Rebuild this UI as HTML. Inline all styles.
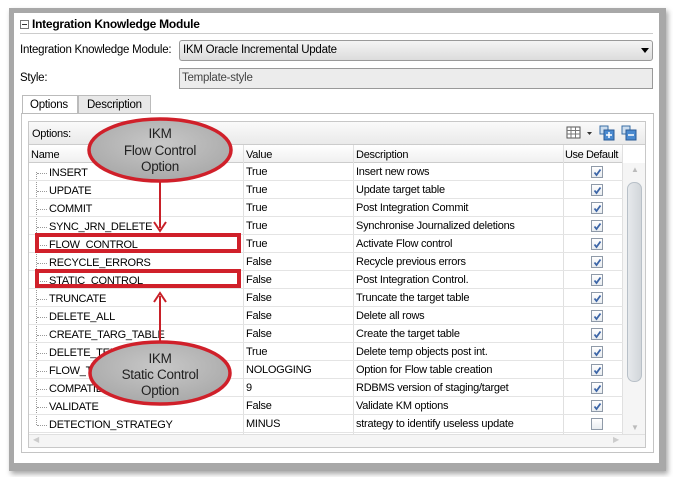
<!DOCTYPE html>
<html><head><style>
*{margin:0;padding:0;box-sizing:border-box}
body{width:673px;height:477px;background:#fff;position:relative;overflow:hidden;font-family:"Liberation Sans",sans-serif;font-size:11px;color:#000;letter-spacing:-0.25px}
.a{position:absolute}
.frame{left:9px;top:8px;width:657px;height:463px;background:#a8a8a8;box-shadow:2px 3px 5px rgba(0,0,0,.35)}
.panel{left:14px;top:13px;width:645px;height:450px;background:#fff}
.t{position:absolute;white-space:nowrap}
.row{position:absolute;left:29px;width:594px;height:18px;border-bottom:1px solid #e4e4e4}
.cb{position:absolute;left:591px;width:12px;height:12px;border:1px solid #8f9aa8;background:linear-gradient(#fff,#e8ecf0)}
.cb svg{position:absolute;left:1px;top:1px}
.vl{position:absolute;top:145px;height:289px;width:1px;background:#e0e0e0}
</style></head><body>
<div class="a frame"></div>
<div class="a panel"></div>
<div class="a" style="left:20px;top:20px;width:9px;height:9px;border:1px solid #777;background:#fff"></div>
<div class="a" style="left:22px;top:24px;width:5px;height:1px;background:#333"></div>
<div class="t" style="left:32px;top:17px;font-weight:bold;font-size:12px">Integration Knowledge Module</div>
<div class="a" style="left:20px;top:33px;width:633px;height:1px;background:#ccc"></div>
<div class="t" style="left:20px;top:44px;font-size:11.5px">Integration Knowledge Module:</div>
<div class="a" style="left:179px;top:40px;width:474px;height:21px;border:1px solid #999;border-radius:3px;background:linear-gradient(#f4f4f4,#dcdcdc)"></div>
<div class="t" style="left:183px;top:44px;font-size:11.5px">IKM Oracle Incremental Update</div>
<div class="a" style="left:641px;top:48px;width:0;height:0;border-left:4px solid transparent;border-right:4px solid transparent;border-top:5px solid #000"></div>
<div class="t" style="left:20px;top:72px;font-size:11.5px">Style:</div>
<div class="a" style="left:179px;top:68px;width:474px;height:21px;border:1px solid #999;background:#ececec"></div>
<div class="t" style="left:182px;top:72px;font-size:11.5px;color:#444">Template-style</div>
<div class="a" style="left:22px;top:95px;width:56px;height:19px;border:1px solid #bbb;border-bottom:none;background:#fff"></div>
<div class="t" style="left:30px;top:99px;font-size:11.5px">Options</div>
<div class="a" style="left:78px;top:95px;width:73px;height:18px;border:1px solid #bbb;border-bottom:none;background:#e8e8e8"></div>
<div class="t" style="left:87px;top:99px;font-size:11.5px">Description</div>
<div class="a" style="left:21px;top:113px;width:633px;height:340px;border:1px solid #c4c4c4;border-top-color:#bbb"></div>
<div class="a" style="left:28px;top:121px;width:618px;height:327px;border:1px solid #c8c8c8"></div>
<div class="a" style="left:29px;top:122px;width:616px;height:23px;background:linear-gradient(#fafafa,#eaeaea);border-bottom:1px solid #ccc"></div>
<div class="t" style="left:32px;top:128px">Options:</div>
<svg class="a" style="left:566px;top:125px" width="80" height="16">
<rect x="1" y="2" width="13" height="11" fill="#fff" stroke="#555"/><path d="M1 5.5h13M1 9h13M5 2v11M9.5 2v11" stroke="#777"/>
<path d="M21 7h5l-2.5 3z" fill="#333"/>
<rect x="34" y="1" width="8" height="8" fill="#cde" stroke="#3a6ea5"/><rect x="38" y="5" width="10" height="10" fill="#4a8ad0" stroke="#2a5a95"/><path d="M43 7v6M40 10h6" stroke="#fff" stroke-width="1.5"/>
<rect x="56" y="1" width="8" height="8" fill="#cde" stroke="#3a6ea5"/><rect x="60" y="5" width="10" height="10" fill="#4a8ad0" stroke="#2a5a95"/><path d="M62 10h6" stroke="#fff" stroke-width="1.5"/>
</svg>
<div class="a" style="left:29px;top:145px;width:594px;height:18px;background:linear-gradient(#fff,#f0f0f0);border-bottom:1px solid #ccc"></div>
<div class="t" style="left:31px;top:149px">Name</div>
<div class="t" style="left:246px;top:149px">Value</div>
<div class="t" style="left:356px;top:149px">Description</div>
<div class="t" style="left:565px;top:149px;letter-spacing:-0.4px">Use Default</div>
<div class="vl" style="left:243px"></div><div class="vl" style="left:353px"></div><div class="vl" style="left:563px"></div><div class="vl" style="left:622px"></div>
<div class="a" style="left:623px;top:163px;width:22px;height:271px;background:#f5f5f5"></div>
<div class="a" style="left:627px;top:182px;width:15px;height:200px;border:1px solid #b8c0c8;border-radius:7px;background:linear-gradient(90deg,#e6e9ec,#d2d6da)"></div>
<div class="t" style="left:631px;top:165px;color:#bbb;font-size:8px">▲</div>
<div class="t" style="left:631px;top:423px;color:#bbb;font-size:8px">▼</div>
<div class="a" style="left:29px;top:434px;width:616px;height:13px;background:#f5f5f5;border-top:1px solid #e0e0e0"></div>
<div class="t" style="left:33px;top:435px;color:#ccc;font-size:8px">◀</div>
<div class="t" style="left:613px;top:435px;color:#ccc;font-size:8px">▶</div>
<div class="a" style="left:36px;top:172px;width:0;height:253px;border-left:1px dotted #999"></div>
<div id="rows"></div>
<script>
var d=[["INSERT","True","Insert new rows",1],["UPDATE","True","Update target table",1],["COMMIT","True","Post Integration Commit",1],["SYNC_JRN_DELETE","True","Synchronise Journalized deletions",1],["FLOW_CONTROL","True","Activate Flow control",1],["RECYCLE_ERRORS","False","Recycle previous errors",1],["STATIC_CONTROL","False","Post Integration Control.",1],["TRUNCATE","False","Truncate the target table",1],["DELETE_ALL","False","Delete all rows",1],["CREATE_TARG_TABLE","False","Create the target table",1],["DELETE_TEMP_OBJECTS","True","Delete temp objects post int.",1],["FLOW_TABLE_OPTIONS","NOLOGGING","Option for Flow table creation",1],["COMPATIBLE","9","RDBMS version of staging/target",1],["VALIDATE","False","Validate KM options",1],["DETECTION_STRATEGY","MINUS","strategy to identify useless update",0]];
var h="";
d.forEach(function(r,i){var y=163+i*18;
h+='<div class="row" style="top:'+y+'px"></div>';
h+='<div class="a" style="left:37px;top:'+(y+10)+'px;width:10px;border-top:1px dotted #999"></div>';
h+='<div class="t" style="left:49px;top:'+(y+4)+'px">'+r[0]+'</div>';
h+='<div class="t" style="left:246px;top:'+(y+3)+'px">'+r[1]+'</div>';
h+='<div class="t" style="left:356px;top:'+(y+3)+'px">'+r[2]+'</div>';
h+='<div class="cb" style="top:'+(y+3)+'px">'+(r[3]?'<svg width="9" height="9"><path d="M1.5 4.5l2 2.5 4-5.5" fill="none" stroke="#3d66a8" stroke-width="1.8"/></svg>':'')+'</div>';});
document.getElementById("rows").innerHTML=h;
</script>
<div class="a" style="left:35px;top:233px;width:206px;height:20px;border:4px solid #d0202a"></div>
<div class="a" style="left:35px;top:269px;width:206px;height:19px;border:4px solid #d0202a"></div>
<svg class="a" style="left:0;top:0" width="673" height="477">
<defs><radialGradient id="g" cx="50%" cy="40%" r="60%"><stop offset="0" stop-color="#c8c8c8"/><stop offset="1" stop-color="#a9a9a9"/></radialGradient></defs>
<path d="M160 181V228" stroke="#c82028" stroke-width="2"/><path d="M154 222l6 9 6-9" fill="none" stroke="#c82028" stroke-width="2"/>
<path d="M160 342V296" stroke="#c82028" stroke-width="2"/><path d="M154 302l6-9 6 9" fill="none" stroke="#c82028" stroke-width="2"/>
<ellipse cx="160" cy="150" rx="71" ry="31" fill="url(#g)" stroke="#d0202a" stroke-width="3.5"/>
<ellipse cx="160" cy="373" rx="70" ry="31" fill="url(#g)" stroke="#d0202a" stroke-width="3.5"/>
<g font-family="Liberation Sans" font-size="13.5" fill="#222" text-anchor="middle" letter-spacing="-0.3">
<text x="160" y="138">IKM</text><text x="160" y="155">Flow Control</text><text x="160" y="171">Option</text>
<text x="160" y="363">IKM</text><text x="160" y="379">Static Control</text><text x="160" y="395">Option</text>
</g></svg>
</body></html>
